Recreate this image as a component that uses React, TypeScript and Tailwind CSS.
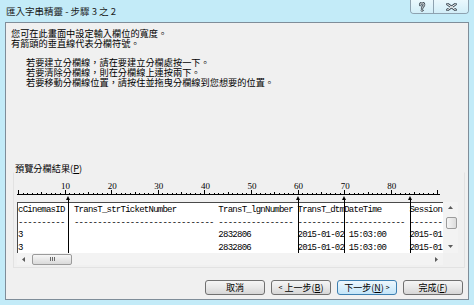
import React from "react";

const CJK = "font-['Noto_Sans_CJK_TC','Noto_Sans_CJK_SC',sans-serif]";
const MONO = "font-['Liberation_Mono',monospace]";

// ruler: one char = 4.66px, char 0 at x=1 inside the ruler
const CW = 4.66;
const cx = (c: number) => 1 + CW * c;

const ROWS = [
  "cCinemasID  TransT_strTicketNumber         TransT_lgnNumber TransT_dtmDateTime      Session",
  "----------  ------------------------------ ---------------- ----------------------- -------",
  "3                                          2832806          2015-01-02 15:03:00     2015-01",
  "3                                          2832806          2015-01-02 15:03:00     2015-01",
];

const BREAKS = [
  { line: "left-[51px]", arrow: "left-[49px]" },
  { line: "left-[281px]", arrow: "left-[279px]" },
  { line: "left-[327px]", arrow: "left-[325px]" },
  { line: "left-[393px]", arrow: "left-[391px]" },
];

const Ruler = () => {
  const ticks = [];
  for (let c = 0; c <= 90; c++) {
    const h = c % 10 === 0 ? 4 : c % 5 === 0 ? 2 : 1;
    ticks.push(
      <rect key={c} x={Math.round(cx(c))} y={21 - h} width={1} height={h} fill="#000" />
    );
  }
  return (
    <svg width={426} height={29} className="block">
      <rect x={0} y={21} width={423} height={1} fill="#000" />
      {ticks}
      {[10, 20, 30, 40, 50, 60, 70, 80].map((n) => (
        <text
          key={n}
          x={cx(n) + 1}
          y={16}
          fontSize={9}
          fontFamily="'Liberation Serif', serif"
          textAnchor="middle"
          fill="#000"
        >
          {n}
        </text>
      ))}
    </svg>
  );
};

const Tri = ({ dir }: { dir: "up" | "down" | "left" | "right" }) => {
  const d = {
    up: "M0 3 L2.5 0 L5 3Z",
    down: "M0 0 L5 0 L2.5 3Z",
    left: "M3 0 L3 5 L0 2.5Z",
    right: "M0 0 L3 2.5 L0 5Z",
  }[dir];
  const vertical = dir === "up" || dir === "down";
  return (
    <svg width={vertical ? 5 : 3} height={vertical ? 3 : 5} className="block">
      <path d={d} fill="#5b5b5b" />
    </svg>
  );
};

const Btn = ({
  children,
  primary,
}: {
  children: React.ReactNode;
  primary?: boolean;
}) => (
  <div
    className={
      primary
        ? "w-[60px] h-[15px] rounded-[3px] border border-[#3c7fb1] bg-linear-to-b from-[#eef7fd] via-[#d9effc] to-[#c4e5f8] flex items-center justify-center text-[9px] leading-none text-black"
        : "w-[60px] h-[15px] rounded-[3px] border border-[#707070] bg-linear-to-b from-[#f5f5f5] via-[#e8e8e8] to-[#d6d6d6] flex items-center justify-center text-[9px] leading-none text-black"
    }
  >
    {children}
  </div>
);

const HelpIcon = () => (
  <svg width={8} height={10} className="block">
    <g fill="none" strokeLinecap="round">
      <path d="M2.2 3 C2.2 1.6 3.1 1 4.1 1 C5.3 1 6 1.8 6 2.8 C6 4.1 4.1 4.5 4.1 6.2" stroke="#44525c" strokeWidth={2.6} />
      <path d="M2.2 3 C2.2 1.6 3.1 1 4.1 1 C5.3 1 6 1.8 6 2.8 C6 4.1 4.1 4.5 4.1 6.2" stroke="#ffffff" strokeWidth={0.9} />
      <circle cx={4.1} cy={8.4} r={1.1} fill="#fff" stroke="#44525c" strokeWidth={0.8} />
    </g>
  </svg>
);

const CloseIcon = () => (
  <svg width={11} height={8} className="block">
    <g fill="none" strokeLinecap="round">
      <path d="M1.5 1.2 L9.5 6.8 M9.5 1.2 L1.5 6.8" stroke="#44525c" strokeWidth={2.8} />
      <path d="M1.5 1.2 L9.5 6.8 M9.5 1.2 L1.5 6.8" stroke="#ffffff" strokeWidth={1} />
    </g>
  </svg>
);

export default function App() {
  return (
    <div className={`w-[474px] h-[305px] bg-[#c3ebf8] flex flex-col overflow-hidden ${CJK}`}>
      {/* title bar */}
      <div className="h-[22px] flex items-start justify-between pl-[6px] pr-[5px]">
        <div className="pt-[5px] text-[9.5px] leading-[12px] text-[#1b1b1b]">
          匯入字串精靈 - 步驟 3 之 2
        </div>
        <div className="flex h-[14px] rounded-b-[4px] border border-t-0 border-[#8ea2b0] overflow-hidden">
          <div className="w-[23px] flex items-center justify-center border-r border-[#8ea2b0] bg-linear-to-b from-[#eaf8fd] to-[#d2eef8]">
            <HelpIcon />
          </div>
          <div className="w-[34px] flex items-center justify-center bg-linear-to-b from-[#eaf8fd] to-[#d2eef8]">
            <CloseIcon />
          </div>
        </div>
      </div>

      {/* client area */}
      <div className="mx-[5px] h-[278px] border border-[#7f8d99] bg-[#f0f0f0] flex flex-col">
        <div className="pt-[5px] text-[9.2px] leading-[10px] text-black">
          <div className="pl-[5px]">您可在此畫面中設定輸入欄位的寬度。</div>
          <div className="pl-[5px]">有箭頭的垂直線代表分欄符號。</div>
          <div className="pl-[20px] mt-[9px]">若要建立分欄線，請在要建立分欄處按一下。</div>
          <div className="pl-[20px]">若要清除分欄線，則在分欄線上連按兩下。</div>
          <div className="pl-[20px]">若要移動分欄線位置，請按住並拖曳分欄線到您想要的位置。</div>
        </div>

        <div className="mt-[76px] pl-[9px] text-[9.2px] leading-[10px] text-black">
          預覽分欄結果(<span className="underline">P</span>)
        </div>

        {/* preview frame */}
        <div className="-mt-px ml-[7px] w-[452px] border border-[#e2e2e2] border-t-transparent pl-[3px] pb-[2px]">
          <div className="relative w-[441px]">
            <Ruler />
            <div className="flex">
              <div className="w-[426px] flex flex-col">
                <div
                  className={`h-[51px] bg-white border-t border-l border-[#4a4a4a] whitespace-pre pt-[1px] text-[9px] leading-[12.5px] tracking-[-0.741px] text-black ${MONO}`}
                >
                  {ROWS.map((r, i) => (
                    <div key={i}>{r}</div>
                  ))}
                </div>
                <div className="h-[12px] bg-[#f3f3f3] flex items-center">
                  <div className="ml-[5px]">
                    <Tri dir="left" />
                  </div>
                  <div className="ml-[7px] w-[40px] h-[11px] rounded-[2px] border border-[#9b9b9b] bg-linear-to-b from-[#f6f6f6] to-[#dadada] flex items-center justify-center gap-[1px]">
                    <span className="w-px h-[4px] bg-[#6a6a6a]" />
                    <span className="w-px h-[4px] bg-[#6a6a6a]" />
                    <span className="w-px h-[4px] bg-[#6a6a6a]" />
                  </div>
                  <div className="ml-auto mr-[5px]">
                    <Tri dir="right" />
                  </div>
                </div>
              </div>
              <div className="w-[15px] flex flex-col">
                <div className="h-[51px] bg-[#f3f3f3] flex flex-col items-center">
                  <div className="mt-[4px]">
                    <Tri dir="up" />
                  </div>
                  <div className="mt-[8px] ml-[1px] w-[11px] h-[12px] rounded-[2px] border border-[#9b9b9b] bg-linear-to-r from-[#f6f6f6] to-[#dcdcdc]" />
                  <div className="mt-auto mb-[5px]">
                    <Tri dir="down" />
                  </div>
                </div>
                <div className="h-[12px] bg-[#f0f0f0]" />
              </div>
            </div>

            {/* column break markers */}
            {BREAKS.map((b, i) => (
              <React.Fragment key={i}>
                <div className={`absolute top-[23px] ${b.arrow} w-0 h-0 border-l-[2.5px] border-r-[2.5px] border-b-[4px] border-l-transparent border-r-transparent border-b-black`} />
                <div className={`absolute top-[26px] ${b.line} w-px h-[54px] bg-black`} />
              </React.Fragment>
            ))}
          </div>
        </div>

        {/* buttons */}
        <div className="mt-[12px] flex justify-end gap-[6px] pr-[5px]">
          <Btn>取消</Btn>
          <Btn>
            <span className="text-[7px] mr-[2px]">&lt;</span>上一步(<span className="underline">B</span>)
          </Btn>
          <Btn primary>
            下一步(<span className="underline">N</span>)<span className="text-[7px] ml-[2px]">&gt;</span>
          </Btn>
          <Btn>
            完成(<span className="underline">F</span>)
          </Btn>
        </div>
      </div>
    </div>
  );
}
